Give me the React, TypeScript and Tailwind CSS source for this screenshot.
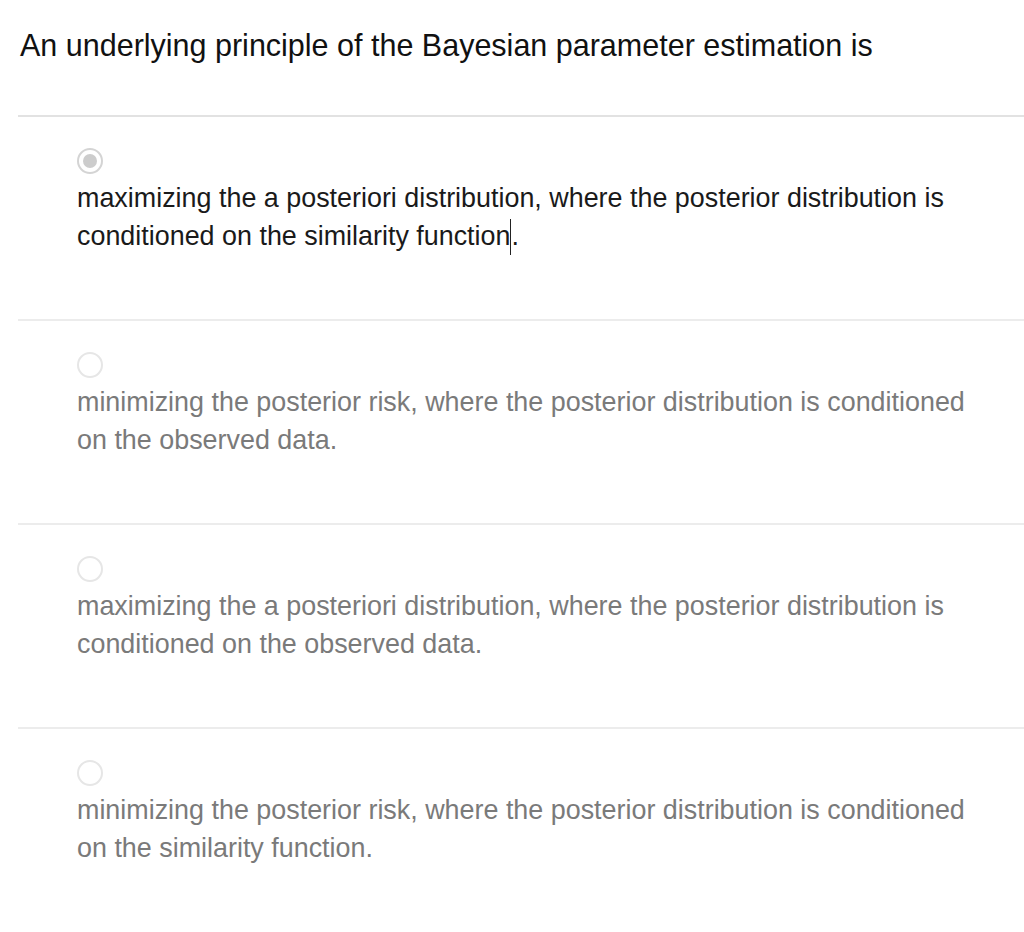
import React from "react";

const options = [
  {
    text: "maximizing the a posteriori distribution, where the posterior distribution is conditioned on the similarity function",
    selected: true,
  },
  {
    text: "minimizing the posterior risk, where the posterior distribution is conditioned on the observed data.",
    selected: false,
  },
  {
    text: "maximizing the a posteriori distribution, where the posterior distribution is conditioned on the observed data.",
    selected: false,
  },
  {
    text: "minimizing the posterior risk, where the posterior distribution is conditioned on the similarity function.",
    selected: false,
  },
];

export default function App() {
  return (
    <div
      className="w-[1024px] h-[932px] bg-white overflow-hidden"
      style={{ fontFamily: '"Liberation Sans", Arial, sans-serif' }}
    >
      <div className="pt-[27px] pl-[20px] h-[115px] text-[30.5px] leading-[36px] text-[#111]">
        An underlying principle of the Bayesian parameter estimation is
      </div>
      <div className="ml-[18px] border-t-2 border-[#e2e2e2]" />
      {options.map((o, i) => (
        <div key={i}>
          <div className="h-[202px] pl-[77px] pt-[31px]">
            <div
              className={`w-[26px] h-[26px] rounded-full border-2 flex items-center justify-center ${
                o.selected ? "border-[#d4d4d4]" : "border-[#e6e6e6]"
              }`}
            >
              {o.selected && <div className="w-[14px] h-[14px] rounded-full bg-[#cccccc]" />}
            </div>
            <div
              className={`mt-[5px] pr-[48px] text-[26.9px] leading-[38px] ${
                o.selected ? "text-[#1a1a1a]" : "text-[#7a7a7a]"
              }`}
            >
              {o.text}
              {o.selected && (
                <>
                  <span className="inline-block w-[1px] h-[36px] bg-[#222] align-[-10px]" />.
                </>
              )}
            </div>
          </div>
          {i < options.length - 1 && <div className="ml-[18px] border-t-2 border-[#ececec]" />}
        </div>
      ))}
    </div>
  );
}
